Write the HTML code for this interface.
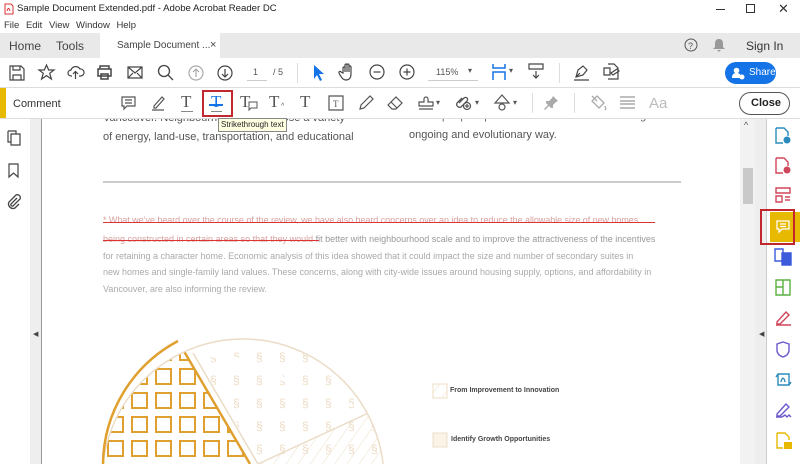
<!DOCTYPE html>
<html><head><meta charset="utf-8"><style>
*{margin:0;padding:0;box-sizing:border-box}
html,body{width:800px;height:464px;overflow:hidden}
body{background:#fff;font-family:"Liberation Sans",sans-serif;position:relative;color:#333}
.a{position:absolute}
.t{font-size:11px;white-space:nowrap}
svg{position:absolute;overflow:visible}
.top{z-index:5}
</style></head><body>
<!-- page content -->
<div class="a" style="left:103px;top:112px;font-size:11px;color:#555;white-space:nowrap">Vancouver. Neighbourhoods can choose a variety</div>
<div class="a t" style="left:103px;top:131px;font-size:11px;color:#555">of energy, land-use, transportation, and educational</div>
<div class="a" style="left:409px;top:110px;font-size:11px;color:#666;white-space:nowrap">where people upload their own stories and thoughts in an</div>
<div class="a t" style="left:409px;top:129px;font-size:11px;color:#555">ongoing and evolutionary way.</div>
<div class="a" style="left:103px;top:181px;width:578px;height:2px;background:#ccc"></div>
<div class="a t" style="left:103px;top:215px;font-size:9px;color:#d8a0a0;letter-spacing:-0.05px">* What we’ve heard over the course of the review, we have also heard concerns over an idea to reduce the allowable size of new homes</div>
<div class="a" style="left:103px;top:222px;width:552px;height:1px;background:#d33"></div>
<div class="a t" style="left:103px;top:234px;font-size:9px;color:#999"><span style="color:#d8a0a0">being constructed in certain areas so that they would</span> fit better with neighbourhood scale and to improve the attractiveness of the incentives</div>
<div class="a" style="left:103px;top:240px;width:216px;height:1px;background:#d33"></div>
<div class="a t" style="left:103px;top:251px;font-size:9px;color:#aaa">for retaining a character home. Economic analysis of this idea showed that it could impact the size and number of secondary suites in</div>
<div class="a t" style="left:103px;top:267px;font-size:9px;color:#aaa">new homes and single-family land values. These concerns, along with city-wide issues around housing supply, options, and affordability in</div>
<div class="a t" style="left:103px;top:284px;font-size:9px;color:#aaa">Vancouver, are also informing the review.</div>
<svg style="left:0;top:0" width="740" height="464" viewBox="0 0 740 464">
<defs>
<clipPath id="c"><circle cx="243" cy="480" r="141"/></clipPath>
<clipPath id="pg"><rect x="0" y="0" width="740" height="464"/></clipPath>
<pattern id="sq" width="24" height="24" patternUnits="userSpaceOnUse" x="8" y="5"><rect x="4" y="4" width="15" height="15" fill="none" stroke="#e0a030" stroke-width="2"/></pattern>
<pattern id="dots" width="23" height="23" patternUnits="userSpaceOnUse" x="0" y="2"><text x="3" y="14" font-size="12" fill="#eddcc4" font-family="Liberation Sans">§</text></pattern>
<pattern id="hat" width="10" height="10" patternUnits="userSpaceOnUse" patternTransform="rotate(35)"><line x1="0" y1="0" x2="0" y2="10" stroke="#efe2cf" stroke-width="1.2"/></pattern>
</defs>
<g clip-path="url(#pg)">
<g clip-path="url(#c)">
<path d="M193 350L370 412L380 464L260 464z" fill="url(#dots)"/>
<path d="M195 340L400 340L400 412L370 412z" fill="url(#dots)"/>
<path d="M258 464L370 412L400 420L400 464z" fill="url(#hat)"/>
<path d="M178 341L250 464L90 464L90 341z" fill="url(#sq)"/>
<path d="M178 341L250 464" stroke="#e0a030" stroke-width="2.5"/>
<path d="M193 353L258 464M258 464L375 410" stroke="#eadcc6" stroke-width="1.5"/>
</g>
<circle cx="243" cy="480" r="141" fill="none" stroke="#eadcc6" stroke-width="1.5"/>
<path d="M103 464A141 141 0 0 1 178 341" fill="none" stroke="#e0a030" stroke-width="2.5"/>
</g>
<rect x="433" y="384" width="14" height="14" fill="url(#hat)" stroke="#eddcc4"/>
<rect x="433" y="433" width="14" height="14" fill="#faf3e8" stroke="#eddcc4"/>
</svg>
<div class="a t" style="left:450px;top:387px;font-size:7px;color:#444;font-weight:bold">From Improvement to Innovation</div>
<div class="a t" style="left:451px;top:436px;font-size:7px;color:#444;font-weight:bold">Identify Growth Opportunities</div>

<div class="top">
<div class="a" style="left:0;top:0;width:800px;height:18px;background:#fff"></div>
<svg style="left:4px;top:3px" width="10" height="12"><path d="M1 1h6l2 2v8H1z" fill="#fff" stroke="#d33"/><path d="M3 8c1-3 2-4 3 0" stroke="#d33" fill="none"/></svg>
<div class="a t" style="left:17px;top:3px;font-size:9.6px;color:#222">Sample Document Extended.pdf - Adobe Acrobat Reader DC</div>
<div class="a" style="left:716px;top:9px;width:9px;height:1px;background:#333"></div>
<div class="a" style="left:746px;top:4px;width:9px;height:9px;border:1px solid #333"></div>
<div class="a t" style="left:778px;top:1px;font-size:13px;color:#333">✕</div>
<div class="a" style="left:0;top:18px;width:800px;height:15px;background:#fff"></div>
<div class="a t" style="left:4px;top:20px;font-size:9.5px;color:#333;word-spacing:4px">File&nbsp;Edit&nbsp;View&nbsp;Window&nbsp;Help</div>
<div class="a" style="left:0;top:33px;width:800px;height:25px;background:#e9e9e9"></div>
<div class="a t" style="left:9px;top:39px;font-size:12px;color:#444">Home</div>
<div class="a t" style="left:56px;top:39px;font-size:12px;color:#444">Tools</div>
<div class="a" style="left:100px;top:33px;width:120px;height:25px;background:#fff"></div>
<div class="a t" style="left:117px;top:40px;font-size:10px;color:#444">Sample Document ...</div>
<div class="a t" style="left:210px;top:39px;font-size:11px;color:#444">×</div>
<svg style="left:684px;top:38px" width="14" height="14"><circle cx="7" cy="7" r="6" fill="none" stroke="#555"/><text x="4" y="11" font-size="9" fill="#555" font-family="Liberation Sans">?</text></svg>
<svg style="left:713px;top:38px" width="12" height="14"><path d="M6 1c3 0 4 2 4 5v3l2 2H0l2-2V6c0-3 1-5 4-5zM4 12h4l-2 2z" fill="#999"/></svg>
<div class="a t" style="left:746px;top:39px;font-size:12px;color:#333">Sign In</div>
<div class="a" style="left:0;top:58px;width:800px;height:30px;background:#fff;border-bottom:1px solid #ddd"></div>
<svg style="left:9px;top:65px" width="16" height="16" fill="none" stroke="#444" stroke-width="1.2"><path d="M1 1h11l3 3v11H1z M4 1v4h7V1 M4 15v-5h8v5"/></svg>
<svg style="left:38px;top:64px" width="17" height="17" fill="none" stroke="#444" stroke-width="1.2"><path d="M8.5 1l2.2 5h5.3l-4.3 3.3 1.7 5.7-4.9-3.4-4.9 3.4 1.7-5.7L1 6h5.3z"/></svg>
<svg style="left:67px;top:64px" width="17" height="16" fill="none" stroke="#444" stroke-width="1.2"><path d="M5 12H4a3 3 0 010-6 5 5 0 019-1 3.5 3.5 0 011 7h-2M8.5 15V8M6 10l2.5-2.5L11 10"/></svg>
<svg style="left:96px;top:65px" width="17" height="15" fill="none" stroke="#444" stroke-width="1.5"><path d="M4 4V1h9v3M2 4h13v7H2zM5 9h7v5H5z"/></svg>
<svg style="left:127px;top:66px" width="16" height="13" fill="none" stroke="#444" stroke-width="1.2"><path d="M1 1h14v11H1zM1 1l7 6 7-6M1 12l5-5M15 12l-5-5"/></svg>
<svg style="left:157px;top:64px" width="17" height="17" fill="none" stroke="#444" stroke-width="1.3"><circle cx="7" cy="7" r="5.5"/><path d="M11 11l5 5M4.5 7h.1M7 7h.1M9.5 7h.1"/></svg>
<svg style="left:188px;top:65px" width="16" height="16" fill="none" stroke="#aaa" stroke-width="1.2"><circle cx="8" cy="8" r="7"/><path d="M8 12V4M5 7l3-3 3 3"/></svg>
<svg style="left:217px;top:65px" width="16" height="16" fill="none" stroke="#444" stroke-width="1.2"><circle cx="8" cy="8" r="7"/><path d="M8 4v8M5 9l3 3 3-3"/></svg>
<div class="a t" style="left:253px;top:67px;font-size:9px;color:#555">1</div>
<div class="a" style="left:247px;top:80px;width:20px;height:1px;background:#ccc"></div>
<div class="a t" style="left:273px;top:67px;font-size:9px;color:#555">/ 5</div>
<div class="a" style="left:297px;top:63px;width:1px;height:20px;background:#ddd"></div>
<svg style="left:313px;top:64px" width="12" height="17"><path d="M1 1l10 9h-5l3 6-2 1-3-6-3 4z" fill="#1473e6"/></svg>
<svg style="left:339px;top:63px" width="17" height="18" fill="none" stroke="#444" stroke-width="1.2"><path d="M4 10V5a1 1 0 012 0v4V2a1 1 0 012 0v7V2a1 1 0 012 0v7V4a1 1 0 012 0v7c0 4-2 6-5 6s-4-2-6-5l-1-2a1 1 0 012-1z"/></svg>
<svg style="left:369px;top:64px" width="16" height="16" fill="none" stroke="#444" stroke-width="1.2"><circle cx="8" cy="8" r="7"/><path d="M4.5 8h7"/></svg>
<svg style="left:399px;top:64px" width="16" height="16" fill="none" stroke="#444" stroke-width="1.2"><circle cx="8" cy="8" r="7"/><path d="M4.5 8h7M8 4.5v7"/></svg>
<div class="a t" style="left:436px;top:67px;font-size:9px;color:#555">115%</div>
<div class="a t" style="left:468px;top:66px;font-size:8px;color:#555">▾</div>
<div class="a" style="left:428px;top:80px;width:50px;height:1px;background:#ccc"></div>
<svg style="left:492px;top:63px" width="14" height="18" fill="none" stroke="#1473e6" stroke-width="1.5"><path d="M1 1v4h12V1M1 17v-8h12v8"/></svg>
<div class="a t" style="left:509px;top:66px;font-size:8px;color:#555">▾</div>
<svg style="left:528px;top:63px" width="16" height="17" fill="none" stroke="#444" stroke-width="1.2"><path d="M1 1h14v5H1zM4 3.5h.1M7 3.5h.1M10 3.5h.1M8 8v7M5 12l3 3 3-3"/></svg>
<div class="a" style="left:559px;top:63px;width:1px;height:20px;background:#ddd"></div>
<svg style="left:573px;top:64px" width="17" height="17" fill="none" stroke="#444" stroke-width="1.2"><path d="M3 13l2-7 5-4 4 4-4 5-7 2zM3 13l4-4M1 16h15"/></svg>
<svg style="left:603px;top:63px" width="17" height="18" fill="none" stroke="#444" stroke-width="1.2"><path d="M5 1h6l4 4v11H5M1 5h6v7H1zM8 10l6-4 2 2-6 4z"/></svg>
<div class="a" style="left:725px;top:62px;width:51px;height:22px;border-radius:11px;background:#1473e6"></div>
<svg style="left:732px;top:67px" width="13" height="13" fill="#fff"><circle cx="4.5" cy="3.5" r="2.8"/><path d="M0 11c0-4 2-5 4.5-5s4.5 1 4.5 5z"/><circle cx="10" cy="10" r="2.5"/></svg>
<div class="a t" style="left:749px;top:67px;font-size:10px;color:#fff">Share</div>
<div class="a" style="left:0;top:88px;width:800px;height:31px;background:#fff;border-bottom:1px solid #ddd"></div>
<div class="a" style="left:0;top:88px;width:6px;height:30px;background:#e7b900"></div>
<div class="a t" style="left:13px;top:98px;font-size:11px;color:#333">Comment</div>
<svg style="left:121px;top:96px" width="15" height="14" fill="none" stroke="#555" stroke-width="1.2"><path d="M1 1h13v9H6l-3 3v-3H1zM4 4h7M4 7h7"/></svg>
<svg style="left:150px;top:95px" width="16" height="16" fill="none" stroke="#555" stroke-width="1.2"><path d="M4 11l8-9 2 2-8 9H4zM2 15h12" /></svg>
<div class="a" style="left:181px;top:92px;font-family:'Liberation Serif',serif;font-size:17px;color:#555">T</div>
<div class="a" style="left:181px;top:111px;width:12px;height:1px;background:#888"></div>
<div class="a" style="left:202px;top:90px;width:31px;height:27px;border:2px solid #c1272d"></div>
<div class="a" style="left:211px;top:92px;font-family:'Liberation Serif',serif;font-size:17px;color:#1473e6">T</div>
<div class="a" style="left:209px;top:104px;width:14px;height:1.5px;background:#1473e6"></div>
<div class="a" style="left:211px;top:111px;width:11px;height:1px;background:#888"></div>
<div class="a" style="left:240px;top:92px;font-family:'Liberation Serif',serif;font-size:17px;color:#555">T</div>
<svg style="left:248px;top:101px" width="10" height="10" fill="none" stroke="#555"><path d="M1 1h8v6H3l-2 2z"/></svg>
<div class="a" style="left:269px;top:92px;font-family:'Liberation Serif',serif;font-size:17px;color:#555">T</div>
<div class="a t" style="left:281px;top:103px;font-size:7px;color:#555">^</div>
<div class="a" style="left:300px;top:92px;font-family:'Liberation Serif',serif;font-size:17px;color:#555">T</div>
<svg style="left:328px;top:95px" width="16" height="16" fill="none" stroke="#555" stroke-width="1.2"><path d="M1 1h14v14H1z"/><text x="5" y="12" font-size="9" fill="#555" stroke="none" font-family="Liberation Serif">T</text></svg>
<svg style="left:358px;top:95px" width="16" height="16" fill="none" stroke="#555" stroke-width="1.2"><path d="M2 14l1-4 9-9 3 3-9 9z"/></svg>
<svg style="left:386px;top:95px" width="18" height="16" fill="none" stroke="#555" stroke-width="1.2"><path d="M2 10l8-8 6 6-6 6H6zM5 7l6 6"/></svg>
<svg style="left:418px;top:94px" width="16" height="17" fill="none" stroke="#555" stroke-width="1.2"><path d="M6 8V5a2 2 0 114 0v3h5v4H1V8zM1 15h14"/></svg>
<div class="a t" style="left:436px;top:98px;font-size:8px;color:#555">▾</div>
<svg style="left:454px;top:94px" width="18" height="17" fill="none" stroke="#555" stroke-width="1.3"><path d="M8 4L3 9a3 3 0 004 4l6-6a2 2 0 00-3-3L5 9"/><circle cx="13" cy="12" r="3.5"/><path d="M13 10v4M11 12h4"/></svg>
<div class="a t" style="left:475px;top:98px;font-size:8px;color:#555">▾</div>
<svg style="left:494px;top:94px" width="18" height="17" fill="none" stroke="#555" stroke-width="1.2"><path d="M8 1l7 8H1zM11 13a3 3 0 11-6 0 3 3 0 016 0"/></svg>
<div class="a t" style="left:513px;top:98px;font-size:8px;color:#555">▾</div>
<div class="a" style="left:532px;top:93px;width:1px;height:20px;background:#ddd"></div>
<svg style="left:544px;top:95px" width="15" height="15" fill="#aaa"><path d="M9 1l5 5-2 1-3 3 0 3-2 0-2-2-4 4-1-1 4-4-2-2 0-2 3 0 3-3z"/></svg>
<div class="a" style="left:574px;top:93px;width:1px;height:20px;background:#ddd"></div>
<svg style="left:589px;top:94px" width="18" height="17" fill="none" stroke="#aaa" stroke-width="1.3"><path d="M8 2l7 7-5 5-7-7zM3 2l5 5M16 12c0 2 2 2 0 4"/></svg>
<svg style="left:620px;top:96px" width="15" height="13" stroke="#aaa" stroke-width="1.5"><path d="M0 1h15M0 5h15M0 8h15M0 12h15"/></svg>
<div class="a t" style="left:649px;top:95px;font-size:15px;color:#bbb">Aa</div>
<div class="a" style="left:739px;top:92px;width:51px;height:23px;border:1px solid #555;border-radius:12px"></div>
<div class="a t" style="left:751px;top:97px;font-size:11px;color:#222;font-weight:bold">Close</div>
<div class="a t" style="left:218px;top:118px;font-size:8px;color:#222;background:#ffffe1;border:1px solid #888;padding:1px 2px;line-height:10px">Strikethrough text</div>
</div>
<!-- left sidebar -->
<div class="a" style="left:30px;top:119px;width:11px;height:345px;background:#eee"></div>
<div class="a" style="left:41px;top:119px;width:1px;height:345px;background:#999"></div>
<svg style="left:7px;top:130px" width="14" height="16" fill="none" stroke="#444" stroke-width="1.2"><path d="M4 4h9v11H4zM1 1h8v3M1 1v11h3"/></svg>
<svg style="left:8px;top:163px" width="11" height="15" fill="none" stroke="#444" stroke-width="1.2"><path d="M1 1h9v13l-4.5-4L1 14z"/></svg>
<svg style="left:6px;top:193px" width="15" height="16" fill="none" stroke="#444" stroke-width="1.3"><path d="M11 5l-6 6a1.5 1.5 0 002 2l7-7a3 3 0 00-4-4L3 9a4.5 4.5 0 006 6l4-4"/></svg>
<div class="a t" style="left:33px;top:330px;font-size:7px;color:#444">◀</div>
<!-- right side -->
<div class="a" style="left:740px;top:119px;width:15px;height:345px;background:#f2f2f2"></div>
<div class="a t" style="left:744px;top:120px;font-size:9px;color:#555">^</div>
<div class="a" style="left:743px;top:168px;width:10px;height:36px;background:#c9c9c9"></div>
<div class="a" style="left:755px;top:119px;width:11px;height:345px;background:#eee"></div>
<div class="a" style="left:766px;top:119px;width:1px;height:345px;background:#ccc"></div>
<div class="a t" style="left:759px;top:330px;font-size:7px;color:#444">◀</div>
<div class="a" style="left:770px;top:212px;width:30px;height:30px;background:#e7b900"></div>
<div class="a" style="left:760px;top:209px;width:35px;height:36px;border:2px solid #c1272d"></div>
<svg style="left:776px;top:220px" width="14" height="13" fill="none" stroke="#fff" stroke-width="1.3"><path d="M1 1h12v8H6l-3 3V9H1zM4 4h6M4 6.5h6"/></svg>
<svg style="left:775px;top:127px" width="16" height="18" fill="none" stroke-width="1.4"><path d="M1 1h8l4 4v4M1 1v15h7" stroke="#2a8bbd"/><circle cx="12" cy="13" r="3.5" fill="#2a8bbd"/></svg>
<svg style="left:775px;top:157px" width="16" height="18" fill="none" stroke-width="1.4"><path d="M1 1h8l4 4v4M1 1v15h7" stroke="#d0465a"/><circle cx="12" cy="13" r="3.5" fill="#d0465a"/></svg>
<svg style="left:775px;top:187px" width="16" height="16" fill="none" stroke="#d0465a" stroke-width="1.4"><path d="M1 1h14v5H1zM1 9h6v6H1zM10 10h5M10 13h5"/></svg>
<svg style="left:774px;top:248px" width="18" height="18" fill="none" stroke-width="1.4"><path d="M1 1h8v12H1z" stroke="#3b5bdb"/><path d="M8 5h9v12H8z" fill="#3b5bdb" stroke="#3b5bdb"/></svg>
<svg style="left:775px;top:279px" width="16" height="17" fill="none" stroke="#5cb040" stroke-width="1.4"><path d="M1 1h14v15H1zM8 1v15M1 8h7"/></svg>
<svg style="left:775px;top:310px" width="17" height="16" fill="none" stroke="#d0465a" stroke-width="1.4"><path d="M2 12l9-10 3 3-9 9H2zM1 15h15"/></svg>
<svg style="left:776px;top:341px" width="14" height="17" fill="none" stroke="#6a5acd" stroke-width="1.4"><path d="M7 1l6 2v6c0 4-3 6-6 7-3-1-6-3-6-7V3z"/></svg>
<svg style="left:775px;top:371px" width="17" height="17" fill="none" stroke="#2a8bbd" stroke-width="1.4"><path d="M3 3h11v11H3zM1 6l2-3M16 11l-2 3M6 11c1-5 3-5 4 0"/></svg>
<svg style="left:775px;top:402px" width="17" height="16" fill="none" stroke="#6a5acd" stroke-width="1.4"><path d="M2 12l9-10 3 3-9 9H2zM1 15h6l3-2 2 2 2-2 2 2"/></svg>
<svg style="left:776px;top:432px" width="16" height="18" fill="none" stroke-width="1.4"><path d="M1 1h8l4 4v3M1 1v15h6" stroke="#e7b900"/><rect x="8" y="10" width="8" height="7" fill="#e7b900"/></svg>
</body></html>
